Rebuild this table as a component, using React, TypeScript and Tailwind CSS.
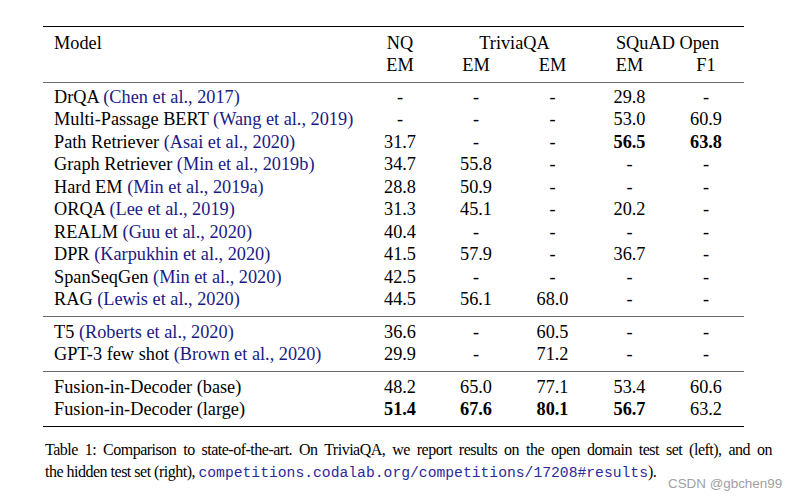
const cite = 'text-[#1a1a86]';

type Row = {
  name: string;
  ref: string;
  vals: string[];
  bold?: boolean[];
};

const group1: Row[] = [
  { name: 'DrQA', ref: 'Chen et al., 2017', vals: ['-', '-', '-', '29.8', '-'] },
  { name: 'Multi-Passage BERT', ref: 'Wang et al., 2019', vals: ['-', '-', '-', '53.0', '60.9'] },
  {
    name: 'Path Retriever',
    ref: 'Asai et al., 2020',
    vals: ['31.7', '-', '-', '56.5', '63.8'],
    bold: [false, false, false, true, true],
  },
  { name: 'Graph Retriever', ref: 'Min et al., 2019b', vals: ['34.7', '55.8', '-', '-', '-'] },
  { name: 'Hard EM', ref: 'Min et al., 2019a', vals: ['28.8', '50.9', '-', '-', '-'] },
  { name: 'ORQA', ref: 'Lee et al., 2019', vals: ['31.3', '45.1', '-', '20.2', '-'] },
  { name: 'REALM', ref: 'Guu et al., 2020', vals: ['40.4', '-', '-', '-', '-'] },
  { name: 'DPR', ref: 'Karpukhin et al., 2020', vals: ['41.5', '57.9', '-', '36.7', '-'] },
  { name: 'SpanSeqGen', ref: 'Min et al., 2020', vals: ['42.5', '-', '-', '-', '-'] },
  { name: 'RAG', ref: 'Lewis et al., 2020', vals: ['44.5', '56.1', '68.0', '-', '-'] },
];

const group2: Row[] = [
  { name: 'T5', ref: 'Roberts et al., 2020', vals: ['36.6', '-', '60.5', '-', '-'] },
  { name: 'GPT-3 few shot', ref: 'Brown et al., 2020', vals: ['29.9', '-', '71.2', '-', '-'] },
];

const group3: Row[] = [
  { name: 'Fusion-in-Decoder (base)', ref: '', vals: ['48.2', '65.0', '77.1', '53.4', '60.6'] },
  {
    name: 'Fusion-in-Decoder (large)',
    ref: '',
    vals: ['51.4', '67.6', '80.1', '56.7', '63.2'],
    bold: [true, true, true, true, false],
  },
];

// model | NQ | TriviaQA x2 | SQuAD x2
const cols = 'grid grid-cols-[319px_76px_76px_77px_77px_76px]';

const TableRow = ({ row }: { row: Row }) => (
  <div className={`${cols} h-[22.5px] items-center`}>
    <div className="pl-[11px] whitespace-nowrap">
      {row.name}
      {row.ref && (
        <>
          {' '}
          <span className={cite}>({row.ref})</span>
        </>
      )}
    </div>
    {row.vals.map((v, i) => (
      <div key={i} className={`text-center ${row.bold?.[i] ? 'font-bold' : ''}`}>
        {v}
      </div>
    ))}
  </div>
);

export default function App() {
  return (
    <div className="relative w-[796px] h-[500px] bg-white text-black overflow-hidden [font-family:'Liberation_Serif','Times_New_Roman',serif]">
      <div className="ml-[43px] mt-[26px] w-[701px] text-[18.3px] leading-[22.5px]">
        <div className="border-t-[1.5px] border-black pt-[4.5px] pb-[5px]">
          <div className={`${cols} h-[22.5px] items-center`}>
            <div className="pl-[11px]">Model</div>
            <div className="text-center">NQ</div>
            <div className="col-span-2 text-center">TriviaQA</div>
            <div className="col-span-2 text-center">SQuAD Open</div>
          </div>
          <div className={`${cols} h-[22.5px] items-center`}>
            <div />
            <div className="text-center">EM</div>
            <div className="text-center">EM</div>
            <div className="text-center">EM</div>
            <div className="text-center">EM</div>
            <div className="text-center">F1</div>
          </div>
        </div>
        <div className="border-t border-[#6b6b6b] pt-[3px] pb-[5px]">
          {group1.map((r) => (
            <TableRow key={r.name} row={r} />
          ))}
        </div>
        <div className="border-t border-[#6b6b6b] pt-[4px] pb-[5px]">
          {group2.map((r) => (
            <TableRow key={r.name} row={r} />
          ))}
        </div>
        <div className="border-t border-[#6b6b6b] pt-[4px] pb-[5px]">
          {group3.map((r) => (
            <TableRow key={r.name} row={r} />
          ))}
        </div>
        <div className="border-t-[1.5px] border-black" />
      </div>

      <div className="ml-[45px] mt-[12px] w-[727px] text-[16px] leading-[22px] tracking-[-0.5px]">
        <p className="whitespace-nowrap text-justify [text-align-last:justify]">
          Table 1: Comparison to state-of-the-art. On TriviaQA, we report results on the open domain test set (left), and on
        </p>
        <p className="whitespace-nowrap">
          the hidden test set (right),{' '}
          <span className="[font-family:'Liberation_Mono',monospace] text-[14.7px] tracking-normal text-[#2b2b9a]">
            competitions.codalab.org/competitions/17208#results
          </span>
          ).
        </p>
      </div>

      <div className="absolute left-[668px] top-[474px] text-[13.4px] text-[#a0a0a0] [font-family:'Liberation_Sans',sans-serif]">
        CSDN @gbchen99
      </div>
    </div>
  );
}
